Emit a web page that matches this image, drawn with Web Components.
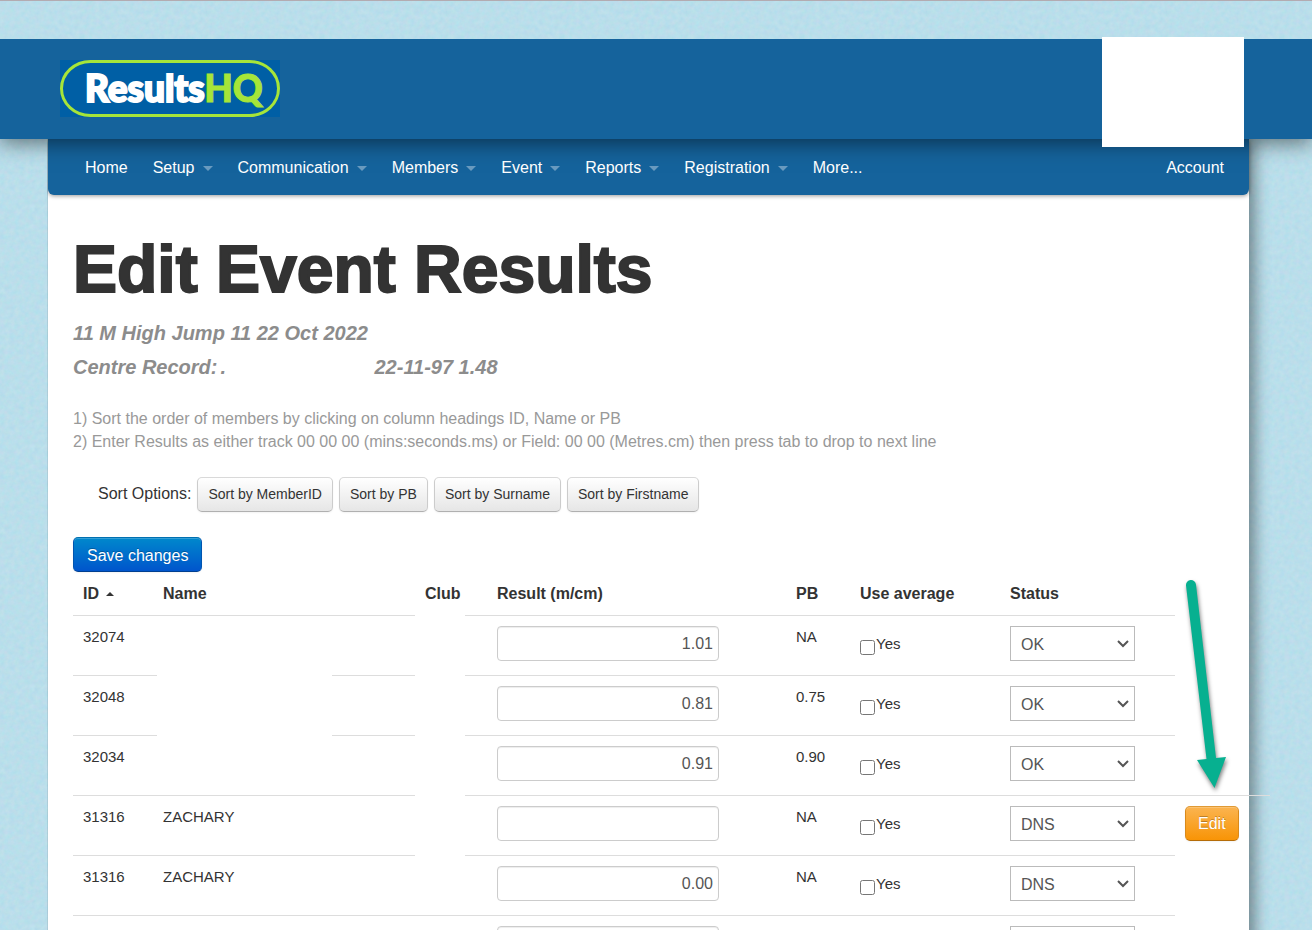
<!DOCTYPE html>
<html lang="en">
<head>
<meta charset="utf-8">
<title>Edit Event Results - ResultsHQ</title>
<style>
html, body { margin: 0; padding: 0; }
body {
  font-family: "Liberation Sans", Arial, sans-serif;
  font-size: 16px;
  color: #333;
  background-color: #b9deea;
  background-image: url("data:image/svg+xml,%3Csvg xmlns='http://www.w3.org/2000/svg' width='240' height='240'%3E%3Cfilter id='n' x='0' y='0' width='1' height='1' color-interpolation-filters='sRGB'%3E%3CfeTurbulence type='fractalNoise' baseFrequency='.2' numOctaves='3' stitchTiles='stitch'/%3E%3CfeColorMatrix values='.16 0 0 0 .65 0 .08 0 0 .83 0 0 .06 0 .89 0 0 0 0 .6'/%3E%3C/filter%3E%3Crect width='240' height='240' filter='url(%23n)'/%3E%3C/svg%3E");
}
</style>
</head>
<body>
<results-app></results-app>

<template id="app">
<style>
:host { display: flex; flex-direction: column; height: 100vh; overflow: hidden; border-top: 1px solid #b3abb1; box-sizing: border-box; padding-top: 38px; }
.page { flex: 1 0 auto; margin: 0 63px 0 48px; background: #fff; box-shadow: 6px 0 14px rgba(0,0,0,.4); clip-path: inset(0 -40px 0 -1px); }
main { padding: 38px 0 0 25px; }
h1 { margin: 0 0 11px; font-size: 66px; line-height: 72px; font-weight: bold; -webkit-text-stroke: 2px #333; }
h2 { margin: 0; font-size: 20px; line-height: 34px; font-style: italic; font-weight: bold; color: #8c8c8c; display: flex; }
h2 .holder { width: 157px; box-sizing: border-box; padding-left: 3px; }
.help { margin: 23px 0 24px; line-height: 23px; color: #999; }
.sort { display: flex; gap: 6px; padding-left: 25px; margin-bottom: 25px; }
.sort span { line-height: 33px; }
</style>
<site-header></site-header>
<div class="page">
  <site-nav></site-nav>
  <main>
    <h1>Edit Event Results</h1>
    <h2>11 M High Jump 11 22 Oct 2022</h2>
    <h2><span>Centre Record:</span><span class="holder">.</span><span>22-11-97 1.48</span></h2>
    <p class="help">1) Sort the order of members by clicking on column headings ID, Name or PB<br>2) Enter Results as either track 00 00 00 (mins:seconds.ms) or Field: 00 00 (Metres.cm) then press tab to drop to next line</p>
    <div class="sort"><span>Sort Options:</span>
      <ui-button kind="small">Sort by MemberID</ui-button>
      <ui-button kind="small">Sort by PB</ui-button>
      <ui-button kind="small">Sort by Surname</ui-button>
      <ui-button kind="small">Sort by Firstname</ui-button>
    </div>
    <ui-button kind="primary">Save changes</ui-button>
    <results-table></results-table>
  </main>
</div>
</template>

<template id="header">
<style>
:host { display: block; position: relative; z-index: 2; }
.bar { display: flex; justify-content: space-between; align-items: flex-start; height: 100px; padding: 0 68px 0 60px; background: #15639c; box-shadow: 0 4px 20px rgba(0,0,0,.5); clip-path: inset(0 0 -40px); }
.logo { display: block; margin-top: 21px; line-height: 0; }
.club-logo { position: absolute; top: -2px; right: 68px; width: 142px; height: 110px; background: #fff; }
.word { font-family: "Lato", sans-serif; font-weight: 900; font-size: 37px; }
</style>
<div class="bar">
  <a class="logo" href="#" aria-label="ResultsHQ">
    <svg width="220" height="57" viewBox="0 0 220 57">
      <rect width="220" height="57" fill="#005fa5"/>
      <rect x="1.5" y="1.5" width="217" height="54" rx="29" ry="27" fill="none" stroke="#a6e539" stroke-width="3"/>
      <text class="word" x="25" y="42" fill="#fff" stroke="#fff" stroke-width="2">Results<tspan fill="#a6e539" stroke="#a6e539" stroke-width="1">HQ</tspan></text>
    </svg>
  </a>
</div>
<div class="club-logo"></div>
</template>

<template id="nav">
<style>
:host { display: block; }
nav { display: flex; justify-content: space-between; align-items: center; height: 56px; box-sizing: border-box; padding: 2px 25px 0 37px; background: #15639c; border-radius: 0 0 6px 6px; box-shadow: 0 1px 4px rgba(0,0,0,.4); }
ul { display: flex; gap: 25px; margin: 0; padding: 0; list-style: none; }
a { display: flex; align-items: center; gap: 8px; color: #fff; text-decoration: none; line-height: 20px; }
.menu::after { content: ""; border: 5px solid transparent; border-top-color: #6a9bc0; border-bottom: 0; }
</style>
<nav>
  <ul>
    <li><a href="#">Home</a></li>
    <li><a class="menu" href="#">Setup</a></li>
    <li><a class="menu" href="#">Communication</a></li>
    <li><a class="menu" href="#">Members</a></li>
    <li><a class="menu" href="#">Event</a></li>
    <li><a class="menu" href="#">Reports</a></li>
    <li><a class="menu" href="#">Registration</a></li>
    <li><a href="#">More...</a></li>
  </ul>
  <a href="#">Account</a>
</nav>
</template>

<template id="button">
<style>
:host { display: inline-block; vertical-align: top; }
button { display: block; height: 35px; box-sizing: border-box; margin: 0; padding: 2px 13px 0; border: 1px solid; border-radius: 5px; font: 16px "Liberation Sans", Arial, sans-serif; white-space: nowrap; box-shadow: inset 0 1px 0 rgba(255,255,255,.2), 0 1px 2px rgba(0,0,0,.05); }
:host([kind=small]) button { font-size: 14px; padding: 0 10px 1px; color: #333; background: linear-gradient(#fff, #e6e6e6); border-color: #d9d9d9 #ccc #b0b0b0; }
:host([kind=primary]) button { color: #fff; background: linear-gradient(#0088cc, #0055cc); border-color: #0070b0 #0055b0 #003f90; text-shadow: 0 -1px 0 rgba(0,0,0,.25); }
:host([kind=warning]) button { color: #fff; background: linear-gradient(#fbb450, #f89406); border-color: #e09a35 #d98a1c #b56c08; padding: 0 12px; text-shadow: 0 -1px 0 rgba(0,0,0,.25); }
</style>
<button type="button"><slot></slot></button>
</template>

<template id="table">
<style>
:host { display: block; margin-right: -21px; }
table { width: 100%; table-layout: fixed; border-collapse: separate; border-spacing: 0; }
th { height: 43px; box-sizing: border-box; padding: 0 10px; text-align: left; font-size: 16px; white-space: nowrap; }
td { height: 60px; box-sizing: border-box; padding: 10px 10px 0; vertical-align: top; border-top: 1px solid #ddd; font-size: 15px; line-height: 22px; }
.id { width: 80px; } .club { width: 50px; } .result { width: 321px; } .pb { width: 64px; } .avg { width: 150px; } .status { width: 175px; } .act { width: 95px; }
th.result, td.result { padding-left: 32px; }
td.club, td.act { border-top-color: transparent; }
tr.last td.club { border-top-color: #ddd; }
td.act.on { border-top-color: #ddd; position: relative; }
td.hidden-name { border-top-color: transparent; background: linear-gradient(#ddd, #ddd) left top / 4px 1px no-repeat border-box, linear-gradient(#ddd, #ddd) right top / 83px 1px no-repeat border-box; }
.asc { display: inline-block; margin: 0 0 3px 7px; border: 4px solid transparent; border-top: 0; border-bottom-color: #333; }
input[type=text] { display: block; width: 222px; height: 35px; box-sizing: border-box; margin: 0; padding: 0 5px; border: 1px solid #ccc; border-radius: 4px; text-align: right; font: 16px "Liberation Sans", Arial, sans-serif; color: #555; background: #fff; box-shadow: inset 0 1px 1px rgba(0,0,0,.075); }
label { display: flex; gap: 1px; padding-top: 7px; }
input[type=checkbox] { width: 15px; height: 15px; margin: 7px 0 0; }
select { appearance: none; display: block; width: 125px; height: 35px; box-sizing: border-box; margin: 0; padding: 1px 20px 0 10px; border: 1px solid #bbb; border-radius: 0; font: 16px "Liberation Sans", Arial, sans-serif; color: #555; background: #fff url("data:image/svg+xml,%3Csvg xmlns='http://www.w3.org/2000/svg' width='12' height='8'%3E%3Cpath d='M1 1l5 5 5-5' fill='none' stroke='%23555' stroke-width='2'/%3E%3C/svg%3E") no-repeat right 5px center; }
svg { position: absolute; left: 0; top: -225px; pointer-events: none; filter: drop-shadow(1px 3px 2px rgba(0,0,0,.5)); }
</style>
<table>
  <thead><tr><th class="id">ID<span class="asc"></span></th><th class="name">Name</th><th class="club">Club</th><th class="result">Result (m/cm)</th><th class="pb">PB</th><th class="avg">Use average</th><th class="status">Status</th><th class="act"></th></tr></thead>
  <tbody></tbody>
</table>
</template>

<script>
class TemplateElement extends HTMLElement {
  constructor() {
    super();
    this.attachShadow({ mode: "open" }).append(
      document.getElementById(this.constructor.template).content.cloneNode(true));
  }
}
class UiButton extends TemplateElement { static template = "button"; }
class SiteHeader extends TemplateElement { static template = "header"; }
class SiteNav extends TemplateElement { static template = "nav"; }

class ResultsTable extends TemplateElement {
  static template = "table";
  connectedCallback() {
    const rows = [
      { id: "32074", result: "1.01", pb: "NA", status: "OK" },
      { id: "32048", result: "0.81", pb: "0.75", status: "OK", hidden: true },
      { id: "32034", result: "0.91", pb: "0.90", status: "OK", hidden: true },
      { id: "31316", name: "ZACHARY", result: "", pb: "NA", status: "DNS", edit: true },
      { id: "31316", name: "ZACHARY", result: "0.00", pb: "NA", status: "DNS" },
      { id: "", result: "", pb: "", status: "", last: true }
    ];
    const arrow = `<svg width="60" height="225" viewBox="0 0 60 225" aria-hidden="true"><path d="M11 14.500a5 5 0 0 1 10-.8L41 187l10-1-11.500 31L22 189l9.500-1Z" fill="#07b090"/></svg>`;
    this.shadowRoot.querySelector("tbody").innerHTML = rows.map(r => `
      <tr class="${r.last ? "last" : ""}">
        <td>${r.id}</td>
        <td class="${r.hidden ? "hidden-name" : ""}">${r.name || ""}</td>
        <td class="club"></td>
        <td class="result"><input type="text" aria-label="Result" value="${r.result}"></td>
        <td>${r.pb}</td>
        <td><label><input type="checkbox" aria-label="Use average">${r.last ? "" : "Yes"}</label></td>
        <td><select aria-label="Status">${(r.last ? [""] : ["OK", "DNS"]).map(s => `<option${s === r.status ? " selected" : ""}>${s}</option>`).join("")}</select></td>
        <td class="act ${r.edit ? "on" : ""}">${r.edit ? `<ui-button kind="warning">Edit</ui-button>${arrow}` : ""}</td>
      </tr>`).join("");
  }
}
class ResultsApp extends TemplateElement { static template = "app"; }

customElements.define("ui-button", UiButton);
customElements.define("site-header", SiteHeader);
customElements.define("site-nav", SiteNav);
customElements.define("results-table", ResultsTable);
customElements.define("results-app", ResultsApp);
</script>
</body>
</html>
